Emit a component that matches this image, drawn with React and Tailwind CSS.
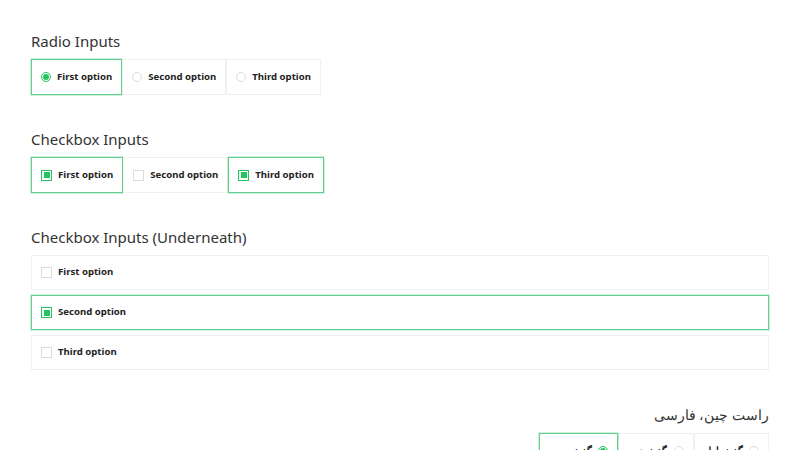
import React from 'react';

const font = { fontFamily: '"Noto Sans", "Open Sans", sans-serif' };

function Radio({ checked }) {
  return (
    <span
      className={`flex h-[10px] w-[10px] shrink-0 items-center justify-center rounded-full border ${
        checked ? 'border-[#22c55e]' : 'border-[#dcdcdc]'
      }`}
    >
      {checked && <span className="h-[6px] w-[6px] rounded-full bg-[#22c55e]" />}
    </span>
  );
}

function Check({ checked }) {
  return (
    <span
      className={`flex h-[11px] w-[11px] shrink-0 items-center justify-center border ${
        checked ? 'border-[#22c55e]' : 'border-[#dcdcdc]'
      }`}
    >
      {checked && <span className="h-[6px] w-[6px] bg-[#22c55e]" />}
    </span>
  );
}

function Option({ label, checked, type, full }) {
  return (
    <div
      className={`flex items-center gap-[6px] px-[9px] text-[9.6px] font-bold text-[#222] ${
        checked ? 'border border-[#5fd08e] shadow-[0_0_0_0.5px_#9fe3bb]' : 'border border-[#f0f0f0]'
      } ${full ? 'h-[35px] w-full' : 'h-9'}`}
    >
      {type === 'radio' ? <Radio checked={checked} /> : <Check checked={checked} />}
      <span>{label}</span>
    </div>
  );
}

function Heading({ children }) {
  return <h2 className="mb-[8px] text-[15px] font-normal leading-[20px] text-[#333]">{children}</h2>;
}

export default function App() {
  return (
    <div className="h-[450px] overflow-hidden bg-white px-[31px] pt-[31px]" style={font}>
      <Heading>Radio Inputs</Heading>
      <div className="flex">
        <Option type="radio" label="First option" checked />
        <Option type="radio" label="Second option" />
        <Option type="radio" label="Third option" />
      </div>

      <div className="mt-[34px]">
        <Heading>Checkbox Inputs</Heading>
        <div className="flex">
          <Option type="check" label="First option" checked />
          <Option type="check" label="Second option" />
          <Option type="check" label="Third option" checked />
        </div>
      </div>

      <div className="mt-[34px]">
        <Heading>Checkbox Inputs (Underneath)</Heading>
        <div className="flex flex-col gap-[5px]">
          <Option type="check" label="First option" full />
          <Option type="check" label="Second option" checked full />
          <Option type="check" label="Third option" full />
        </div>
      </div>

      <div className="mt-[35px]" dir="rtl">
        <h2 className="mb-[8px] text-[14px] font-normal leading-[20px] text-[#333]">راست چین، فارسی</h2>
        <div className="flex">
          <Option type="radio" label="گزینه اول" />
          <Option type="radio" label="گزینه دوم" />
          <Option type="radio" label="گزینه سوم" checked />
        </div>
      </div>
    </div>
  );
}
